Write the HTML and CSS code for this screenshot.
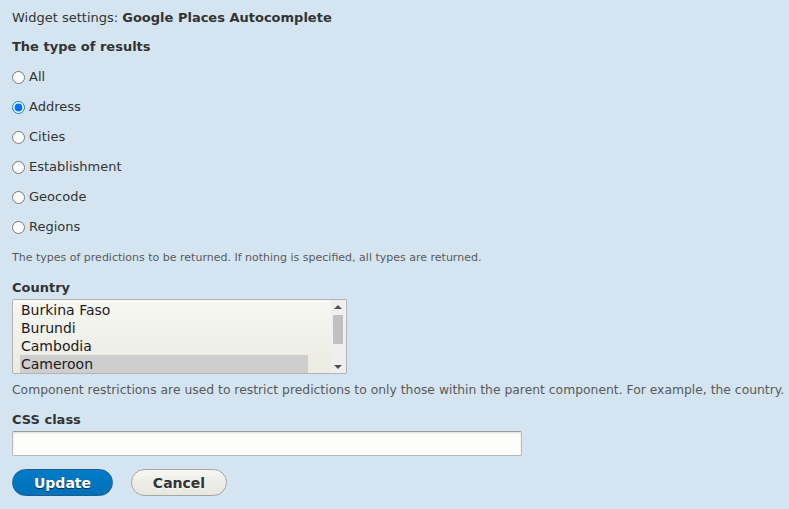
FILE: index.html
```html
<!DOCTYPE html>
<html lang="en">
<head>
<meta charset="utf-8">
<title>Widget settings</title>
<link rel="stylesheet" href="styles.css">
</head>
<body>
<form class="form">
  <div class="title">Widget settings: <strong>Google Places Autocomplete</strong></div>

  <div class="radios" role="radiogroup">
    <div class="label heading">The type of results</div>
    <div class="radio-list">
      <label class="radio"><input type="radio" name="type"><span>All</span></label>
      <label class="radio"><input type="radio" name="type" checked><span>Address</span></label>
      <label class="radio"><input type="radio" name="type"><span>Cities</span></label>
      <label class="radio"><input type="radio" name="type"><span>Establishment</span></label>
      <label class="radio"><input type="radio" name="type"><span>Geocode</span></label>
      <label class="radio"><input type="radio" name="type"><span>Regions</span></label>
    </div>
    <div class="desc-small">The types of predictions to be returned. If nothing is specified, all types are returned.</div>
  </div>

  <div class="field country-field">
    <div class="label">Country</div>
    <div class="listbox" role="listbox">
      <div class="options">
        <div class="option">Burkina Faso</div>
        <div class="option">Burundi</div>
        <div class="option">Cambodia</div>
        <div class="option selected">Cameroon</div>
      </div>
      <div class="scrollbar">
        <div class="arrow up"></div>
        <div class="track"><div class="thumb"></div></div>
        <div class="arrow down"></div>
      </div>
    </div>
    <div class="desc">Component restrictions are used to restrict predictions to only those within the parent component. For example, the country.</div>
  </div>

  <div class="field css-field">
    <div class="label">CSS class</div>
    <input class="text" type="text">
  </div>

  <div class="actions">
    <button type="button" class="btn primary">Update</button>
    <button type="button" class="btn secondary">Cancel</button>
  </div>
</form>
</body>
</html>
```
FILE: styles.css
```css
html, body {
  margin: 0;
  padding: 0;
}
body {
  background: #d4e5f1;
  font-family: "DejaVu Sans", Verdana, sans-serif;
  font-size: 13px;
  color: #333;
  line-height: 18px;
}
.form {
  display: flex;
  flex-direction: column;
  padding: 9px 12px 8px;
}
.title {
  color: #333;
}
.title strong {
  font-weight: bold;
}
.label {
  font-weight: bold;
  color: #333;
}
.radios {
  display: flex;
  flex-direction: column;
  margin-top: 11px;
}
.heading {
  margin-bottom: 12px;
}
.radio-list {
  display: flex;
  flex-direction: column;
  gap: 12px;
}
.radio {
  display: flex;
  align-items: center;
  gap: 4px;
  height: 18px;
}
.radio input {
  margin: 0;
  width: 13px;
  height: 13px;
}
.desc-small {
  font-size: 11px;
  line-height: 14px;
  color: #595959;
  margin-top: 15px;
}
.field {
  display: flex;
  flex-direction: column;
}
.country-field {
  margin-top: 14px;
}
.listbox {
  margin-top: 2px;
  width: 333px;
  height: 73px;
  border: 1px solid #b3b3b3;
  border-radius: 2px;
  background: linear-gradient(#f7f7f3, #ebebe3);
  display: flex;
  justify-content: space-between;
  overflow: hidden;
  font-size: 14px;
  color: #1a1a1a;
}
.options {
  padding: 1px 0 0 7px;
  display: flex;
  flex-direction: column;
}
.option {
  width: 287px;
  height: 18px;
  line-height: 18px;
  padding-left: 1px;
}
.option.selected {
  background: #cecece;
}
.scrollbar {
  width: 14px;
  margin-right: 1px;
  display: flex;
  flex-direction: column;
  background: #efefef;
}
.arrow {
  height: 13px;
  display: flex;
  align-items: center;
  justify-content: center;
}
.arrow::before {
  content: "";
  border-left: 4px solid transparent;
  border-right: 4px solid transparent;
}
.arrow.up::before {
  border-bottom: 4px solid #505050;
}
.arrow.down::before {
  border-top: 4px solid #505050;
}
.track {
  flex: 1;
  padding: 0 2px;
}
.thumb {
  margin-top: 2px;
  height: 29px;
  background: #c1c1c1;
}
.desc {
  margin-top: 7px;
  font-size: 12.35px;
  line-height: 18px;
  color: #595959;
  white-space: nowrap;
}
.css-field {
  margin-top: 12px;
}
.text {
  margin: 2px 0 0;
  box-sizing: border-box;
  width: 510px;
  height: 25px;
  border: 1px solid #b8b8b8;
  border-top-color: #999;
  border-radius: 2px;
  background: #fcfcfa;
  box-shadow: inset 0 1px 2px rgba(0, 0, 0, 0.12);
  font: inherit;
  padding: 2px 6px;
}
.actions {
  display: flex;
  gap: 18px;
  margin-top: 13px;
}
.btn {
  box-sizing: border-box;
  height: 27px;
  padding: 0;
  border: 1px solid #a6a6a6;
  border-radius: 20em;
  background: linear-gradient(#f6f6f3, #e7e7df);
  font-family: "DejaVu Sans", Verdana, sans-serif;
  font-size: 14px;
  font-weight: bold;
  color: #333;
  text-shadow: 0 1px hsla(0, 0%, 100%, 0.6);
  cursor: pointer;
}
.btn.primary {
  width: 101px;
  background: linear-gradient(#007bc6, #0071b8);
  border-color: #1e5c90;
  color: #fff;
  text-shadow: 0 1px 1px rgba(0, 0, 0, 0.6);
}
.btn.secondary {
  width: 96px;
}
```
